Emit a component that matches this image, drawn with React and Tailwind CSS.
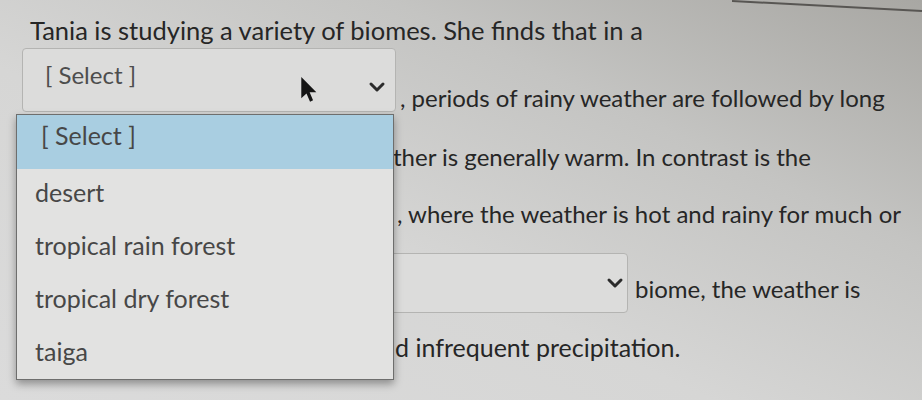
import React from "react";
import { ChevronDown } from "lucide-react";

const options = ["desert", "tropical rain forest", "tropical dry forest", "taiga"];

function SelectBox({ className, label, chevronClass }) {
  return (
    <div
      className={`flex items-center justify-between bg-[#dcdcdb] border border-[#b4b4b2] rounded-[4px] ${className}`}
    >
      <span className="pl-[22px] pb-[10px] text-[24px] text-[#4d4d4d]">{label}</span>
      <ChevronDown size={24} strokeWidth={3} className={`text-[#2b2b2b] ${chevronClass}`} />
    </div>
  );
}

function Cursor() {
  return (
    <svg
      className="absolute left-[301px] top-[77px]"
      width="17"
      height="26"
      viewBox="0 0 12 19"
    >
      <path d="M0 0 L0 15.5 L3.8 12 L6.4 18 L8.6 17 L6.1 11.2 L11 11.2 Z" fill="#151515" />
    </svg>
  );
}

export default function App() {
  return (
    <div className="relative w-[922px] h-[400px] overflow-hidden bg-[linear-gradient(205deg,#a8a7a3_0%,#c4c4c2_30%,#d6d6d5_60%,#dbdbdb_100%)] font-['Lato','Liberation_Sans',sans-serif] text-[24px] leading-[28px] text-[#262626]">
      {/* page border line at the top right */}
      <svg className="absolute right-0 top-0" width="190" height="14">
        <line x1="0" y1="1" x2="190" y2="11" stroke="#585653" strokeWidth="2" />
      </svg>

      <div className="flex flex-col">
        <div className="h-[48px] pt-[15px] pl-[30px] text-[25.5px] leading-[30px] whitespace-nowrap">
          Tania is studying a variety of biomes. She finds that in a
        </div>

        <div className="flex items-end h-[64px]">
          <SelectBox
            className="ml-[22px] w-[374px] h-[64px] pr-[6px]"
            label="[ Select ]"
            chevronClass="mt-[14px]"
          />
          <span className="ml-[4px] whitespace-nowrap">, periods of rainy weather are followed by long</span>
        </div>

        <div className="flex items-end h-[59px] pl-[393px] whitespace-nowrap">
          <span>ther is generally warm. In contrast is the</span>
        </div>

        <div className="flex items-end h-[57px] pl-[397px] whitespace-nowrap">
          <span>, where the weather is hot and rainy for much or</span>
        </div>

        <div className="flex items-start pt-[25px] h-[85px] whitespace-nowrap">
          <SelectBox className="ml-[180px] w-[448px] h-[60px] pr-[0px]" label="" chevronClass="" />
          <span className="ml-[7px] mt-[22px]">biome, the weather is</span>
        </div>

        <div className="flex items-end h-[48px] pl-[395px] text-[25px] whitespace-nowrap">
          <span>d infrequent precipitation.</span>
        </div>
      </div>

      <Cursor />

      {/* open dropdown list */}
      <div className="absolute left-[16px] top-[114px] w-[378px] h-[266px] bg-[#e2e2e1] border border-[#6e6e6d] shadow-[0_4px_8px_rgba(0,0,0,0.35)] text-[25px] text-[#474747]">
        <div className="flex items-center h-[54px] pl-[24px] pb-[14px] bg-[#a9cee1]">[ Select ]</div>
        {options.map((o) => (
          <div key={o} className="flex items-center h-[53px] pl-[18px] pb-[8px]">
            {o}
          </div>
        ))}
      </div>
    </div>
  );
}
